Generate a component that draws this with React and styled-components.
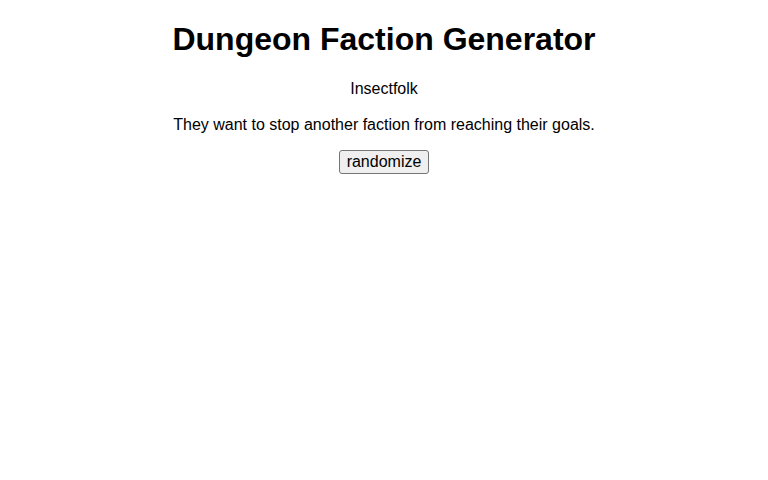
import React, { useState } from "react";
import styled, { createGlobalStyle } from "styled-components";

const GlobalStyle = createGlobalStyle`
  body {
    margin: 0;
    background: #ffffff;
    color: #000000;
    font-family: "Liberation Sans", Arial, sans-serif;
  }
`;

const Page = styled.main`
  text-align: center;
  padding: 0 8px;
`;

const Title = styled.h1`
  font-size: 32px;
  font-weight: bold;
  margin: 21.44px 0;
`;

const Line = styled.p`
  font-size: 16px;
  margin: 16px 0;
  margin-bottom: ${(p) => (p.$loose ? "18px" : "16px")};
`;

const Actions = styled.div`
  margin: 16px 0;
`;

const Button = styled.button`
  font-family: "Liberation Sans", Arial, sans-serif;
  font-size: 16px;
  line-height: normal;
  color: #000000;
  background: #efefef;
  border: 1px solid #767676;
  border-radius: 3px;
  padding: 2px 7px;
  cursor: pointer;
  &:hover {
    background: #e5e5e5;
  }
`;

const RACES = ["Insectfolk", "Goblins", "Cultists", "Undead", "Lizardfolk"];
const GOALS = [
  "They want to stop another faction from reaching their goals.",
  "They want to recover a lost relic.",
  "They want to claim the lower halls as their own.",
];

export default function App() {
  const [race, setRace] = useState(0);
  const [goal, setGoal] = useState(0);

  const randomize = () => {
    setRace(Math.floor(Math.random() * RACES.length));
    setGoal(Math.floor(Math.random() * GOALS.length));
  };

  return (
    <>
      <GlobalStyle />
      <Page>
        <Title>Dungeon Faction Generator</Title>
        <Line $loose>{RACES[race]}</Line>
        <Line>{GOALS[goal]}</Line>
        <Actions>
          <Button onClick={randomize}>randomize</Button>
        </Actions>
      </Page>
    </>
  );
}
